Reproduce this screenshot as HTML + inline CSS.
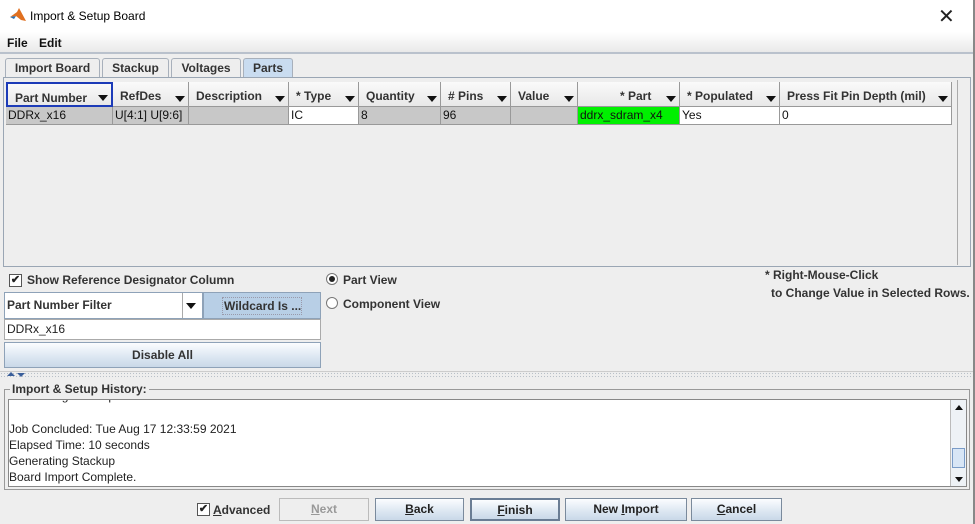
<!DOCTYPE html>
<html><head><style>
*{box-sizing:border-box;margin:0;padding:0}
body{width:975px;height:524px;background:#eeeeee;font-family:"Liberation Sans",sans-serif;font-size:12px;color:#222;position:relative;overflow:hidden}
.a{position:absolute}
.b{font-weight:bold;color:#333}
.tab{position:absolute;top:58px;height:20px;border:1px solid #a8b0bb;border-bottom:none;background:#eeeeee;font-weight:bold;color:#333;text-align:center;line-height:19px;font-size:12px;border-radius:3px 3px 0 0}
.hd{position:absolute;top:82px;height:25px;background:linear-gradient(#fafafa,#e8e8e8);border-right:1px solid #999;border-bottom:1px solid #999;font-weight:bold;color:#333;line-height:28px;padding-left:7px;white-space:nowrap}
.hd:after{content:"";position:absolute;right:3px;bottom:4px;border-left:5px solid transparent;border-right:5px solid transparent;border-top:6px solid #111}
.cl{position:absolute;top:107px;height:18px;background:#c8c8c8;border-right:1px solid #999;border-bottom:1px solid #999;line-height:17px;padding-left:2px;color:#111}
.btn{position:absolute;top:498px;height:23px;border:1px solid #7a8a9c;background:linear-gradient(#fbfdff,#dbe6f1 60%,#c9d8e8);text-align:center;line-height:21px;font-weight:bold;color:#222}
.chk{position:absolute;width:13px;height:13px;border:1px solid #555;background:#fff;font-size:11px;line-height:11px;text-align:center;font-weight:bold}
</style></head><body>
<div class="a" style="left:0;top:0;width:975px;height:32px;background:#fff"></div>
<svg class="a" style="left:10px;top:8px" width="16" height="14"><polygon points="0,9 7,4 9,0 16,13 11,12 6,8" fill="#e07020"/><polygon points="0,9 6,8 4,11" fill="#2a6fb0"/></svg>
<div class="a" style="left:30px;top:9px;font-size:12px;color:#000">Import &amp; Setup Board</div>
<div class="a" style="left:938px;top:4px;font-size:20px;color:#222;font-weight:normal">✕</div>
<div class="a" style="left:0;top:32px;width:975px;height:22px;background:linear-gradient(#fff,#e9e9e9);border-bottom:2px solid #b9c1cc"></div>
<div class="a b" style="left:7px;top:36px;color:#111">File</div>
<div class="a b" style="left:39px;top:36px;color:#111">Edit</div>
<div class="a" style="left:973px;top:0;width:2px;height:524px;background:#888"></div>
<div class="tab" style="left:5px;width:95px">Import Board</div>
<div class="tab" style="left:102px;width:67px">Stackup</div>
<div class="tab" style="left:171px;width:70px">Voltages</div>
<div class="tab" style="left:243px;width:50px;background:#c9dcf0">Parts</div>
<div class="a" style="left:3px;top:77px;width:968px;height:190px;border:1px solid #9aa6b4;background:#eeeeee"></div>
<div class="a" style="left:5px;top:80px;width:953px;height:185px;background:#eeeeee;border-right:1px solid #aaa"></div>
<div class="hd" style="left:6px;width:107px;border:2px solid #1c3bb8">Part Number</div>
<div class="hd" style="left:113px;width:76px">RefDes</div>
<div class="hd" style="left:189px;width:100px">Description</div>
<div class="hd" style="left:289px;width:70px">* Type</div>
<div class="hd" style="left:359px;width:82px">Quantity</div>
<div class="hd" style="left:441px;width:70px">#&nbsp;Pins</div>
<div class="hd" style="left:511px;width:67px">Value</div>
<div class="hd" style="left:578px;width:102px;padding-left:42px">* Part</div>
<div class="hd" style="left:680px;width:100px">* Populated</div>
<div class="hd" style="left:780px;width:172px">Press Fit Pin Depth (mil)</div>
<div class="cl" style="left:6px;width:107px">DDRx_x16</div>
<div class="cl" style="left:113px;width:76px">U[4:1] U[9:6]</div>
<div class="cl" style="left:189px;width:100px"></div>
<div class="cl" style="left:289px;width:70px;background:#fff">IC</div>
<div class="cl" style="left:359px;width:82px">8</div>
<div class="cl" style="left:441px;width:70px">96</div>
<div class="cl" style="left:511px;width:67px"></div>
<div class="cl" style="left:578px;width:102px;background:#00f000">ddrx_sdram_x4</div>
<div class="cl" style="left:680px;width:100px;background:#fff">Yes</div>
<div class="cl" style="left:780px;width:172px;background:#fff">0</div>
<div class="chk" style="left:9px;top:274px">✔</div>
<div class="a b" style="left:27px;top:273px">Show Reference Designator Column</div>
<div class="a" style="left:4px;top:292px;width:199px;height:27px;border:1px solid #8ea2b8;background:#fff"></div>
<div class="a" style="left:7px;top:298px;font-weight:bold;color:#333">Part Number Filter</div>
<div class="a" style="left:182px;top:293px;width:1px;height:25px;background:#aaa"></div>
<div class="a" style="left:186px;top:303px;border-left:5px solid transparent;border-right:5px solid transparent;border-top:6px solid #111"></div>
<div class="a" style="left:203px;top:292px;width:118px;height:27px;background:#b8cfe6;border:1px solid #8ea2b8"></div>
<div class="a" style="left:222px;top:297px;width:80px;height:18px;border:1px dotted #99a;font-weight:bold;color:#333;line-height:16px;white-space:nowrap;overflow:visible;padding-left:1px">Wildcard Is ...</div>
<div class="a" style="left:4px;top:319px;width:317px;height:21px;border:1px solid #aaa;background:#fff;padding-left:2px;line-height:19px">DDRx_x16</div>
<div class="a" style="left:4px;top:342px;width:317px;height:26px;border:1px solid #8ea2b8;background:linear-gradient(#fbfdff,#dbe6f1 60%,#c9d8e8);text-align:center;line-height:24px;font-weight:bold;color:#333">Disable All</div>
<div class="a" style="left:326px;top:273px;width:12px;height:12px;border-radius:50%;border:1px solid #777;background:#fff"></div>
<div class="a" style="left:329px;top:276px;width:6px;height:6px;border-radius:50%;background:#222"></div>
<div class="a b" style="left:343px;top:273px">Part View</div>
<div class="a" style="left:326px;top:297px;width:12px;height:12px;border-radius:50%;border:1px solid #777;background:#fff"></div>
<div class="a b" style="left:343px;top:297px">Component View</div>
<div class="a b" style="left:765px;top:268px">* Right-Mouse-Click</div>
<div class="a b" style="left:771px;top:286px">to Change Value in Selected Rows.</div>
<div class="a" style="left:0;top:371px;width:973px;height:7px;border-top:1px solid #ccc;background-image:radial-gradient(#b8c0c8 0.6px,transparent 0.8px);background-size:3px 3px"></div>
<div class="a" style="left:7px;top:372px;border-left:4px solid transparent;border-right:4px solid transparent;border-bottom:4px solid #3a5e9a"></div>
<div class="a" style="left:17px;top:373px;border-left:4px solid transparent;border-right:4px solid transparent;border-top:4px solid #3a5e9a"></div>
<div class="a" style="left:4px;top:389px;width:966px;height:101px;border:1px solid #999"></div>
<div class="a b" style="left:10px;top:382px;background:#eeeeee;padding:0 2px">Import &amp; Setup History:</div>
<div class="a" style="left:8px;top:399px;width:959px;height:88px;border:1px solid #888;background:#fff;overflow:hidden">
<div style="position:absolute;left:0;top:-12px;line-height:16.3px;color:#222">Generating Stackup<br><br>Job Concluded: Tue Aug 17 12:33:59 2021<br>Elapsed Time: 10 seconds<br>Generating Stackup<br>Board Import Complete.</div>
<div style="position:absolute;right:0;top:0;width:16px;height:86px;background:#eef2f6;border-left:1px solid #bbb">
<div style="position:absolute;left:4px;top:5px;border-left:4px solid transparent;border-right:4px solid transparent;border-bottom:5px solid #111"></div>
<div style="position:absolute;left:1px;top:48px;width:13px;height:20px;border:1px solid #7a9cc8;background:#d8e6f6"></div>
<div style="position:absolute;left:4px;top:77px;border-left:4px solid transparent;border-right:4px solid transparent;border-top:5px solid #111"></div>
</div></div>
<div class="chk" style="left:197px;top:503px">✔</div>
<div class="a b" style="left:213px;top:503px"><u>A</u>dvanced</div>
<div class="btn" style="left:279px;width:90px;background:#eee;border-color:#bbb;color:#999"><u>N</u>ext</div>
<div class="btn" style="left:375px;width:89px"><u>B</u>ack</div>
<div class="btn" style="left:470px;width:90px;border:2px solid #6a7d94"><u>F</u>inish</div>
<div class="btn" style="left:565px;width:122px">New <u>I</u>mport</div>
<div class="btn" style="left:691px;width:91px"><u>C</u>ancel</div>
</body></html>
